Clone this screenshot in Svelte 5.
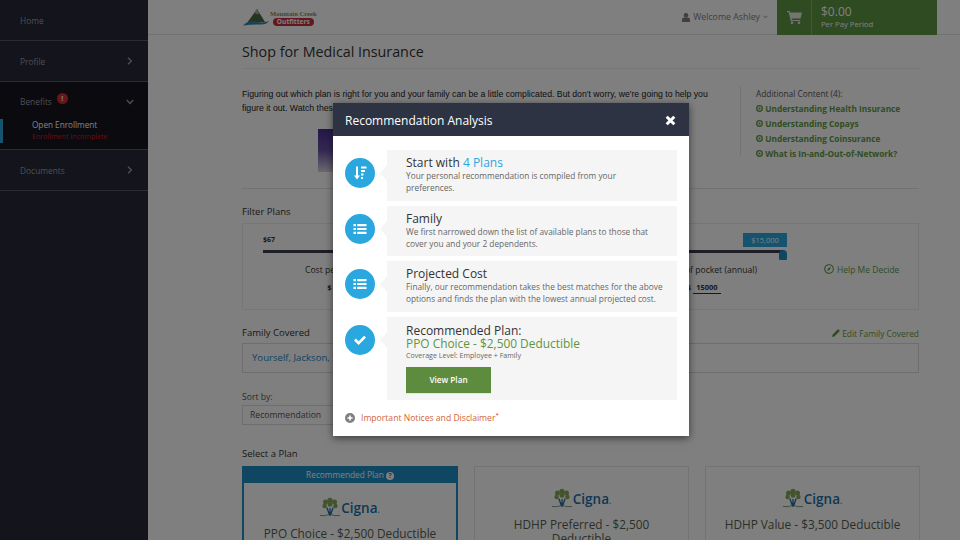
<script>
  const sideLinks = [
    { label: "Home", chevron: false },
    { label: "Profile", chevron: true }
  ];
  const extras = [
    "Understanding Health Insurance",
    "Understanding Copays",
    "Understanding Coinsurance",
    "What is In-and-Out-of-Network?"
  ];
  const plans = [
    { name: "PPO Choice - $2,500 Deductible", picked: true },
    { name: "HDHP Preferred - $2,500 Deductible", picked: false },
    { name: "HDHP Value - $3,500 Deductible", picked: false }
  ];
</script>

{#snippet cigna()}
  <div class="cigna">
    <svg width="20" height="22" viewBox="0 0 20 22">
      <g fill="#86a85a">
        <circle cx="10" cy="3.4" r="2.6" />
        <circle cx="5.5" cy="5" r="2.5" />
        <circle cx="14.5" cy="5" r="2.5" />
        <circle cx="4.6" cy="9" r="2.2" />
        <circle cx="15.4" cy="9" r="2.2" />
        <circle cx="10" cy="7.4" r="2.4" />
      </g>
      <path d="M10 11v8M6.8 10.5l2.6 7M13.2 10.5l-2.6 7" stroke="#1d6a9c" stroke-width="1.3" fill="none" />
      <path d="M0 18.5q6 .8 9-1M20 18.5q-6 .8-9-1" stroke="#4f8a55" stroke-width=".8" fill="none" />
    </svg>
    <span>Cigna<small>.</small></span>
  </div>
{/snippet}

{#snippet stepIcon(kind)}
  <span class="circle">
    <svg width="16" height="16" viewBox="0 0 16 16" fill="#fff">
      {#if kind === "sort"}
        <path d="M4 1.5h2v9h2L5 14.5 2 10.5h2z" />
        <path d="M9 1.5h5.5v2H9zM9 5h4v2H9zM9 8.5h2.5v2H9zM9 12h2v2H9z" />
      {:else if kind === "list"}
        <path d="M1.5 3h2.4v2.2H1.5zM5.2 3h9.3v2.2H5.2zM1.5 6.9h2.4v2.2H1.5zM5.2 6.9h9.3v2.2H5.2zM1.5 10.8h2.4V13H1.5zM5.2 10.8h9.3V13H5.2z" />
      {:else}
        <path d="M2 8.4l1.9-1.9 2.7 2.7 5.5-5.5L14 5.6l-7.4 7.4z" />
      {/if}
    </svg>
  </span>
{/snippet}

<div class="page">
  <aside>
    {#each sideLinks as link}
      <div class="side-item">
        <span>{link.label}</span>
        {#if link.chevron}
          <svg width="6" height="8" viewBox="0 0 6 8"><path d="M1 .8 4.4 4 1 7.2" fill="none" stroke="currentColor" stroke-width="1.4" /></svg>
        {/if}
      </div>
    {/each}
    <div class="side-open">
      <div class="side-head">
        <span>Benefits</span>
        <b class="alert">!</b>
        <svg width="8" height="6" viewBox="0 0 8 6"><path d="M.8 1 4 4.4 7.2 1" fill="none" stroke="currentColor" stroke-width="1.4" /></svg>
      </div>
      <div class="side-sub">
        <p>Open Enrollment</p>
        <p class="incomplete">Enrollment Incomplete</p>
      </div>
    </div>
    <div class="side-item">
      <span>Documents</span>
      <svg width="6" height="8" viewBox="0 0 6 8"><path d="M1 .8 4.4 4 1 7.2" fill="none" stroke="currentColor" stroke-width="1.4" /></svg>
    </div>
  </aside>

  <main>
    <header>
      <div class="logo">
        <svg width="26" height="18" viewBox="0 0 26 18">
          <path d="M4 15 14 1l8 13z" fill="#4a6a3f" />
          <path d="M11 5l3-4 3 5-1.5-.5-1.5 1-1.5-1z" fill="#a8b596" />
          <path d="M0 17.5q6-6 13-4t13-.5q-3 4-9 3.5T0 17.5z" fill="#2f87a8" />
        </svg>
        <div class="logo-text">
          <span>Mountain Creek</span>
          <em>Outfitters</em>
        </div>
      </div>
      <div class="welcome">
        <svg width="8" height="9" viewBox="0 0 8 9" fill="currentColor"><circle cx="4" cy="2.3" r="2.2" /><path d="M0 9V6.4Q0 4.8 2 4.6h4Q8 4.8 8 6.4V9z" /></svg>
        <span>Welcome Ashley</span>
        <svg width="5" height="4" viewBox="0 0 8 6"><path d="M.8 1 4 4.4 7.2 1" fill="none" stroke="currentColor" stroke-width="1.4" /></svg>
      </div>
      <div class="cart">
        <span class="cart-icon">
          <svg width="15" height="13" viewBox="0 0 15 13" fill="#e7ebe2">
            <path d="M0 0h2.6l.5 1.6H15l-1.5 6H4.6l.3 1.3h8.3v1.2H3.7L1.7 1.2H0z" />
            <circle cx="5" cy="11.7" r="1.3" /><circle cx="12" cy="11.7" r="1.3" />
          </svg>
        </span>
        <div class="cart-total">
          <strong>$0.00</strong>
          <span>Per Pay Period</span>
        </div>
      </div>
    </header>

    <div class="content">
      <h1>Shop for Medical Insurance</h1>

      <section class="intro">
        <div class="intro-copy">
          <p>Figuring out which plan is right for you and your family can be a little complicated. But don't worry, we're going to help you figure it out. Watch these videos to learn more about your options.</p>
          <div class="video"></div>
        </div>
        <div class="extras">
          <p>Additional Content (4):</p>
          {#each extras as item}
            <a href="#top">
              <svg width="7" height="7" viewBox="0 0 8 8"><circle cx="4" cy="4" r="3.2" fill="none" stroke="#5f9a43" stroke-width="1.5" /><path d="M3.1 2.2 5.7 4 3.1 5.8z" fill="#5f9a43" /></svg>
              {item}
            </a>
          {/each}
        </div>
      </section>

      <h2 class="filter-title">Filter Plans</h2>
      <section class="filters">
        <div class="sliders">
          <div class="tags">
            <b>$67</b>
            <span class="tag">$15,000</span>
          </div>
          <div class="track"><i></i></div>
          <div class="ranges">
            <div class="range-left">
              <p>Cost per pay period</p>
              <p class="value">$ <u>67</u></p>
            </div>
            <div class="range-right">
              <p>Maximum out of pocket (annual)</p>
              <p class="value">$ <u>15000</u></p>
            </div>
          </div>
        </div>
        <a class="help" href="#top">
          <svg width="10" height="10" viewBox="0 0 10 10"><circle cx="5" cy="5" r="4.3" fill="none" stroke="#5f9a43" stroke-width="1.1" /><path d="M7 3 5.8 5.8 3 7l1.2-2.8z" fill="#5f9a43" /></svg>
          Help Me Decide
        </a>
      </section>

      <div class="family-head">
        <h2>Family Covered</h2>
        <a href="#top">
          <svg width="8" height="8" viewBox="0 0 8 8" fill="#5f9a43"><path d="M0 8l.5-2.3L5.6.6a.8.8 0 0 1 1.1 0l.7.7a.8.8 0 0 1 0 1.1L2.3 7.5z" /></svg>
          Edit Family Covered
        </a>
      </div>
      <div class="family">Yourself, Jackson, Sophia</div>

      <label class="sort-label" for="sort">Sort by:</label>
      <div class="sort" id="sort">Recommendation</div>

      <h2 class="select-title">Select a Plan</h2>
      <section class="plans">
        {#each plans as plan}
          <article class:picked={plan.picked}>
            {#if plan.picked}
              <div class="ribbon">Recommended Plan <b>?</b></div>
            {/if}
            {@render cigna()}
            <h3>{plan.name}</h3>
          </article>
        {/each}
      </section>
    </div>
  </main>

  <div class="overlay"></div>

  <div class="modal">
    <div class="modal-head">
      <span>Recommendation Analysis</span>
      <svg width="11" height="11" viewBox="0 0 11 11"><path d="M1.7 1.7l7.6 7.6M9.3 1.7 1.7 9.3" stroke="#fff" stroke-width="3" /></svg>
    </div>
    <div class="modal-body">
      <div class="step">
        {@render stepIcon("sort")}
        <div class="bubble">
          <h4>Start with <span class="blue">4 Plans</span></h4>
          <p>Your personal recommendation is compiled from your<br />preferences.</p>
        </div>
      </div>
      <div class="step">
        {@render stepIcon("list")}
        <div class="bubble">
          <h4>Family</h4>
          <p>We first narrowed down the list of available plans to those that cover you and your 2 dependents.</p>
        </div>
      </div>
      <div class="step">
        {@render stepIcon("list")}
        <div class="bubble">
          <h4>Projected Cost</h4>
          <p>Finally, our recommendation takes the best matches for the above options and finds the plan with the lowest annual projected cost.</p>
        </div>
      </div>
      <div class="step">
        {@render stepIcon("check")}
        <div class="bubble final">
          <h4>Recommended Plan:</h4>
          <div class="plan-name">PPO Choice - $2,500 Deductible</div>
          <div class="level">Coverage Level: Employee + Family</div>
          <button>View Plan</button>
        </div>
      </div>
      <div class="notice">
        <svg width="10" height="10" viewBox="0 0 10 10"><circle cx="5" cy="5" r="5" fill="#7d7f85" /><path d="M2.4 5h5.2M5 2.4v5.2" stroke="#fff" stroke-width="1.6" /></svg>
        <span>Important Notices and Disclaimer<sup>*</sup></span>
      </div>
    </div>
  </div>
</div>

<style>
  :global(body) {
    margin: 0;
    background: #fff;
    overflow: hidden;
  }
  .page {
    position: relative;
    display: flex;
    width: 960px;
    height: 540px;
    overflow: hidden;
    font-family: "Open Sans", sans-serif;
    color: #333;
    background: #fff;
  }
  p, h1, h2, h3, h4 {
    margin: 0;
    font-weight: 400;
  }
  a {
    text-decoration: none;
  }

  aside {
    flex: 0 0 148px;
    background: #262838;
    color: #9d9ea6;
    font-size: 8.4px;
  }
  .side-item {
    height: 41px;
    box-sizing: border-box;
    padding: 0 15px 0 20px;
    display: flex;
    align-items: center;
    justify-content: space-between;
    border-bottom: 1px solid #575966;
  }
  .side-open {
    height: 68px;
    box-sizing: border-box;
    background: #15151f;
    border-bottom: 1px solid #575966;
    position: relative;
  }
  .side-head {
    display: flex;
    align-items: center;
    padding: 14px 14px 0 20px;
  }
  .side-head svg {
    margin-left: auto;
  }
  .alert {
    width: 11px;
    height: 11px;
    margin: -7px 0 0 5px;
    border-radius: 50%;
    background: #d42a35;
    color: #fff;
    font-size: 7px;
    line-height: 11px;
    text-align: center;
  }
  .side-sub {
    margin-top: 12px;
    padding-left: 32px;
    color: #fff;
    font-size: 8.2px;
    line-height: 11px;
  }
  .side-sub::before {
    content: "";
    position: absolute;
    left: 0;
    top: 37px;
    width: 3px;
    height: 24px;
    background: #2aa7df;
  }
  .incomplete {
    margin-top: 1px;
    color: #c5212c;
    font-size: 7.1px;
  }

  main {
    flex: 1;
    min-width: 0;
  }
  header {
    height: 35px;
    box-sizing: border-box;
    display: flex;
    align-items: flex-start;
    padding-left: 95px;
    border-bottom: 1px solid #e4e4e4;
  }
  .logo {
    display: flex;
    align-items: center;
    gap: 1px;
    padding-top: 8px;
  }
  .logo-text {
    display: flex;
    flex-direction: column;
    align-items: center;
    font-family: "Liberation Serif", serif;
    font-size: 6.6px;
    font-weight: 700;
    line-height: 9px;
    color: #7f8f6b;
  }
  .logo-text em {
    background: #c8313d;
    color: #fff;
    border-radius: 4px;
    padding: 0 4px;
    font-family: "Open Sans", sans-serif;
    font-style: normal;
    font-size: 6.6px;
    line-height: 8px;
  }
  .welcome {
    margin-left: auto;
    height: 34px;
    display: flex;
    align-items: center;
    gap: 3px;
    font-size: 8.8px;
    color: #7c7e84;
  }
  .cart {
    display: flex;
    margin: 0 23px 0 9px;
    width: 160px;
    height: 35px;
    background: #5d9642;
    color: #fff;
  }
  .cart-icon {
    width: 34px;
    display: flex;
    align-items: center;
    justify-content: center;
    border-right: 1px solid #86b06f;
  }
  .cart-total {
    display: flex;
    flex-direction: column;
    padding: 5px 0 0 9px;
    font-size: 7.7px;
    line-height: 10px;
  }
  .cart-total strong {
    font-size: 12px;
    font-weight: 400;
    line-height: 14px;
  }

  .content {
    padding: 0 41px 0 94px;
  }
  h1 {
    height: 34px;
    box-sizing: border-box;
    padding-top: 7px;
    font-size: 14.3px;
    line-height: 19px;
    border-bottom: 1px solid #efefef;
  }
  .intro {
    display: flex;
    height: 119px;
    border-bottom: 1px solid #e4e4e4;
  }
  .intro-copy {
    width: 476px;
    padding-top: 18px;
    font-family: "Liberation Sans", sans-serif;
    font-size: 8.7px;
    line-height: 14px;
    color: #222;
  }
  .video {
    width: 120px;
    height: 43px;
    margin: 14px 0 0 76px;
    background: linear-gradient(180deg, #4a3090, #6a52a8 50%, #d8d4e0);
  }
  .extras {
    height: 70px;
    margin: 17px 0 0 22px;
    padding-left: 15px;
    border-left: 1px solid #e6e6e6;
    font-size: 8.3px;
    line-height: 15px;
    color: #555;
  }
  .extras a {
    display: block;
    font-weight: 700;
    color: #5f9a43;
  }
  h2 {
    font-size: 9.5px;
    line-height: 14px;
    color: #333;
  }
  .filter-title {
    margin-top: 16px;
  }
  .filters {
    display: flex;
    height: 87px;
    box-sizing: border-box;
    margin-top: 4px;
    padding: 8px 0 0 20px;
    border: 1px solid #ececec;
    font-size: 8.6px;
  }
  .sliders {
    width: 520px;
  }
  .tags {
    display: flex;
    justify-content: space-between;
    align-items: center;
    margin-right: -4px;
    height: 15px;
  }
  .tags b {
    font-size: 7px;
  }
  .tag {
    width: 44px;
    line-height: 14px;
    text-align: center;
    font-size: 7.5px;
    background: #2aa7df;
    color: #fff;
  }
  .track {
    position: relative;
    height: 3px;
    margin-top: 3px;
    background: #3a3c50;
  }
  .track i {
    position: absolute;
    right: -4px;
    top: 0;
    width: 8px;
    height: 10px;
    background: #1f8fc5;
    border-radius: 4px 4px 1px 1px;
  }
  .ranges {
    display: flex;
    justify-content: space-between;
    margin-top: 11px;
    text-align: center;
    line-height: 12px;
  }
  .range-left {
    margin-left: 42px;
  }
  .range-right {
    margin-right: 26px;
  }
  .value {
    margin-top: 5px;
    font-size: 7.5px;
    font-weight: 700;
  }
  .range-right .value {
    padding-left: 24px;
  }
  .value u {
    display: inline-block;
    width: 28px;
    text-decoration: none;
    border-bottom: 1px solid #333;
  }
  .help {
    display: flex;
    align-items: center;
    gap: 3px;
    height: 10px;
    margin: 32px 0 0 41px;
    font-size: 8.5px;
    white-space: nowrap;
    color: #5f9a43;
  }
  .family-head {
    display: flex;
    justify-content: space-between;
    align-items: center;
    margin-top: 16px;
  }
  .family-head a {
    font-size: 8.4px;
    color: #5f9a43;
  }
  .family {
    height: 30px;
    box-sizing: border-box;
    margin-top: 3px;
    padding-left: 9px;
    border: 1px solid #ddd;
    font-size: 9.6px;
    line-height: 28px;
    color: #2a86c2;
  }
  .sort-label {
    display: block;
    margin-top: 18px;
    font-size: 8.6px;
    line-height: 12px;
    color: #555;
  }
  .sort {
    width: 200px;
    height: 20px;
    box-sizing: border-box;
    margin-top: 2px;
    padding-left: 7px;
    border: 1px solid #ddd;
    font-size: 8.6px;
    line-height: 18px;
    color: #555;
  }
  .select-title {
    margin-top: 22px;
  }
  .plans {
    display: grid;
    grid-template-columns: 216px 215px 215px;
    gap: 16px;
    margin-top: 5px;
  }
  article {
    height: 130px;
    box-sizing: border-box;
    border: 1px solid #e6e6e6;
    text-align: center;
    padding-top: 20px;
  }
  article.picked {
    border: 2px solid #1f8fc5;
    border-top: 0;
    padding-top: 0;
  }
  .ribbon {
    height: 17px;
    margin: 0 -2px 13px;
    background: #1f8fc5;
    color: #fff;
    font-size: 8.3px;
    line-height: 17px;
  }
  .ribbon b {
    display: inline-block;
    width: 8px;
    height: 8px;
    border-radius: 50%;
    background: #fff;
    color: #1f8fc5;
    font-size: 7px;
    line-height: 8px;
  }
  .cigna {
    display: flex;
    justify-content: center;
    align-items: center;
    gap: 1px;
    height: 24px;
    font-size: 13.5px;
    font-weight: 600;
    color: #1d6fa8;
  }
  .cigna small {
    font-size: 8px;
  }
  h3 {
    margin-top: 6px;
    padding: 0 14px;
    font-size: 11.8px;
    line-height: 14px;
    color: #555f4e;
  }

  .overlay {
    position: absolute;
    inset: 0;
    background: rgba(0, 0, 0, 0.5);
  }
  .modal {
    position: absolute;
    left: 333px;
    top: 103px;
    width: 356px;
    height: 333px;
    background: #fff;
    box-shadow: 0 2px 8px rgba(0, 0, 0, 0.55);
  }
  .modal-head {
    height: 33px;
    box-sizing: border-box;
    padding: 1px 13px 0 12px;
    display: flex;
    align-items: center;
    justify-content: space-between;
    background: #2d3343;
    color: #fff;
    font-size: 12px;
  }
  .modal-body {
    padding: 14px 12px 0;
  }
  .step {
    display: flex;
    align-items: flex-start;
    margin-bottom: 5px;
  }
  .step:nth-child(4) {
    margin-bottom: 0;
  }
  .circle {
    flex: 0 0 30px;
    height: 30px;
    margin-top: 8px;
    border-radius: 50%;
    background: #2aa7df;
    display: flex;
    align-items: center;
    justify-content: center;
  }
  .bubble {
    position: relative;
    flex: 1;
    height: 50.6px;
    box-sizing: border-box;
    margin-left: 12px;
    padding: 6px 10px 0 19px;
    background: #f5f5f5;
    font-size: 8.3px;
    line-height: 12px;
    color: #666;
  }
  .bubble::before {
    content: "";
    position: absolute;
    left: -7px;
    top: 15px;
    border: 8px solid transparent;
    border-left: 0;
    border-right: 7px solid #f5f5f5;
  }
  h4 {
    font-size: 12px;
    line-height: 14px;
    color: #333;
  }
  .blue {
    color: #2aa7df;
  }
  .final {
    height: 83px;
    padding-top: 7px;
  }
  .final h4 {
    line-height: 13px;
  }
  .plan-name {
    font-size: 11.9px;
    line-height: 13px;
    color: #5d9642;
  }
  .level {
    font-size: 7.1px;
    line-height: 11px;
  }
  button {
    display: block;
    width: 85px;
    height: 27px;
    margin: 6px 0 0;
    border: 0;
    border-bottom: 1px solid #dfe7da;
    background: #5d8c3e;
    color: #fff;
    font-family: inherit;
    font-size: 8.2px;
    font-weight: 600;
  }
  .notice {
    display: flex;
    align-items: center;
    gap: 6px;
    margin-top: 12px;
    font-size: 8.6px;
    color: #d2653b;
  }
  sup {
    font-size: 6px;
    line-height: 0;
    color: #d42a35;
  }
</style>
